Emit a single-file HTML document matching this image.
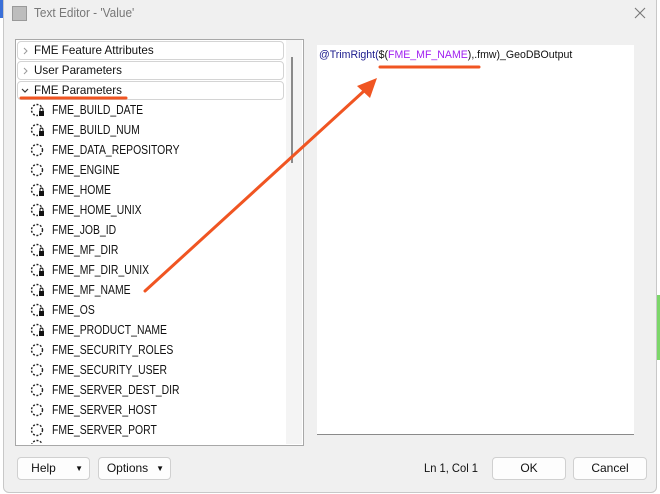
<!DOCTYPE html>
<html><head><style>
body{margin:0;width:660px;height:494px;background:#fff;position:relative;overflow:hidden;font-family:"Liberation Sans",sans-serif;}
.dlg{position:absolute;left:3px;top:-1px;width:652px;height:492px;background:#f0f0f0;border:1px solid #c8c8c8;border-radius:0 0 6px 6px;}
.a{position:absolute}
.hdr{position:absolute;left:17px;width:265px;height:17px;border:1px solid #d4d4d4;border-radius:4px;background:#fff;font-size:12px;line-height:17px;color:#111}
.hdr span{position:absolute;left:16px;transform:scaleX(0.97);transform-origin:left}
.it{position:absolute;left:52px;font-size:13px;color:#111;line-height:14px;transform:scaleX(0.8);transform-origin:left;white-space:nowrap}
.ic{position:absolute;left:30px;width:16px;height:16px}
.btn{position:absolute;top:457px;height:21px;border:1px solid #d0d0d0;border-radius:4px;background:#fdfdfd;font-size:12px;line-height:21px;text-align:center;color:#111}
</style></head><body>
<div class="a" style="left:0;top:0;width:3px;height:18px;background:#3a6fd8"></div>
<div class="dlg"></div>
<div class="a" style="left:12px;top:6px;width:13px;height:13px;border:1px solid #999;background:#bdbdbd"></div>
<div class="a" style="left:34px;top:5px;font-size:13px;color:#777;transform:scaleX(0.91);transform-origin:left;white-space:nowrap">Text Editor - 'Value'</div>
<svg class="a" style="left:634px;top:7px" width="12" height="12"><path d="M1 1L11 11M11 1L1 11" stroke="#777" stroke-width="1.1"/></svg>

<div class="a" style="left:15px;top:39px;width:287px;height:405px;border:1px solid #a8a8a8;background:#fff"></div>
<div class="a" style="left:286px;top:40px;width:16px;height:404px;background:#f4f4f4"></div>
<div class="a" style="left:291px;top:57px;width:2px;height:106px;background:#8a8a8a"></div>

<div class="hdr" style="top:41px"><span>FME Feature Attributes</span><svg style="position:absolute;left:5px;top:5px" width="5" height="8"><path d="M1 1L4 4L1 7" fill="none" stroke="#999" stroke-width="1"/></svg></div>
<div class="hdr" style="top:61px"><span>User Parameters</span><svg style="position:absolute;left:5px;top:5px" width="5" height="8"><path d="M1 1L4 4L1 7" fill="none" stroke="#999" stroke-width="1"/></svg></div>
<div class="hdr" style="top:81px"><span>FME Parameters</span><svg style="position:absolute;left:3px;top:6px" width="8" height="5"><path d="M1 1L4 4L7 1" fill="none" stroke="#333" stroke-width="1.2"/></svg></div>

<svg width="0" height="0" style="position:absolute"><defs>
<g id="g"><circle cx="7" cy="8" r="5.5" fill="none" stroke="#222" stroke-width="1.4" stroke-dasharray="2 1.6"/></g>
<g id="l"><circle cx="7" cy="8" r="5.5" fill="none" stroke="#222" stroke-width="1.4" stroke-dasharray="2 1.6"/><rect x="8" y="7" width="7" height="7" fill="#fff"/><rect x="9" y="9" width="5" height="5" fill="#111"/><path d="M10 9V7.5a1.5 1.5 0 0 1 3 0V9" fill="none" stroke="#111" stroke-width="1"/></g>
</defs></svg>

<div id="list"></div>
<script>
var items=[["FME_BUILD_DATE","l"],["FME_BUILD_NUM","l"],["FME_DATA_REPOSITORY","g"],["FME_ENGINE","g"],["FME_HOME","l"],["FME_HOME_UNIX","l"],["FME_JOB_ID","g"],["FME_MF_DIR","l"],["FME_MF_DIR_UNIX","l"],["FME_MF_NAME","l"],["FME_OS","l"],["FME_PRODUCT_NAME","l"],["FME_SECURITY_ROLES","g"],["FME_SECURITY_USER","g"],["FME_SERVER_DEST_DIR","g"],["FME_SERVER_HOST","g"],["FME_SERVER_PORT","g"]];
var h="";
items.forEach(function(it,i){var y=103+i*20;h+='<svg class="ic" style="top:'+(y-1)+'px"><use href="#'+it[1]+'"/></svg><div class="it" style="top:'+y+'px">'+it[0]+'</div>';});
h+='<svg class="ic" style="top:438px;height:6px"><use href="#g"/></svg>';
document.getElementById("list").innerHTML=h;
</script>

<div class="a" style="left:317px;top:45px;width:317px;height:389px;background:#fff;border-bottom:1px solid #8a8a8a"></div>
<div class="a" style="left:319px;top:49px;font-size:11px;color:#111;white-space:nowrap;transform:scaleX(0.96);transform-origin:left"><span style="color:#1a1a8c">@TrimRight(</span>$(<span style="color:#a020f0">FME_MF_NAME</span>),.fmw)_GeoDBOutput</div>

<div class="btn" style="left:17px;width:71px"><span style="margin-right:20px">Help</span><span style="position:absolute;right:6px;font-size:8px">▼</span></div>
<div class="btn" style="left:98px;width:71px"><span style="margin-right:14px">Options</span><span style="position:absolute;right:6px;font-size:8px">▼</span></div>
<div class="a" style="left:424px;top:461px;font-size:12px;color:#111;transform:scaleX(0.93);transform-origin:left;white-space:nowrap">Ln 1, Col 1</div>
<div class="btn" style="left:492px;width:72px">OK</div>
<div class="btn" style="left:573px;width:72px">Cancel</div>
<div class="a" style="left:657px;top:295px;width:3px;height:65px;background:#7cd66a"></div>

<svg class="a" style="left:0;top:0" width="660" height="494">
<g stroke="#f05522" stroke-width="3" stroke-linecap="round" fill="none">
<line x1="21" y1="98" x2="126" y2="98"/>
<line x1="380" y1="67" x2="479" y2="67"/>
<line x1="145" y1="291" x2="364" y2="91"/>
</g>
<polygon points="377,78 357,86 370,98" fill="#f05522"/>
</svg>
</body></html>
